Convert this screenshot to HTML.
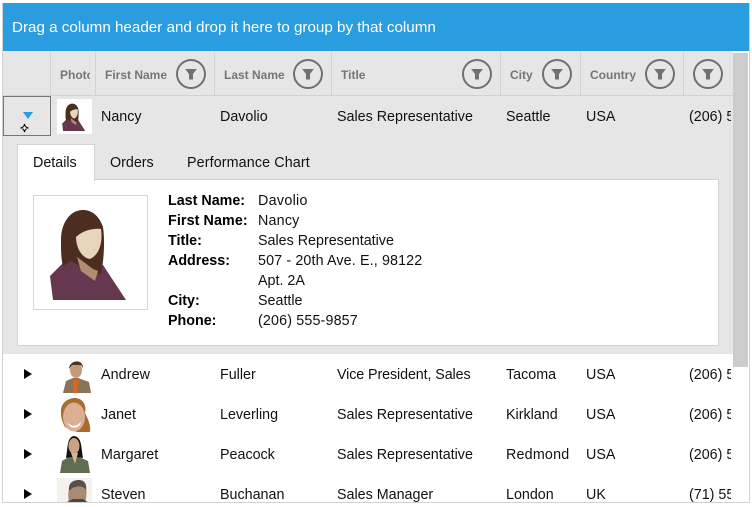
<!DOCTYPE html>
<html><head><meta charset="utf-8">
<style>
html,body{margin:0;padding:0;background:#fff}
#r{position:relative;width:752px;height:507px;overflow:hidden;background:#fff;font-family:"Liberation Sans",sans-serif;font-size:14.3px;color:#111}
#r div{position:absolute}
.t{white-space:nowrap;line-height:20px}
.h{white-space:nowrap;font-weight:bold;font-size:12px;color:#767676;line-height:16px;top:67px}
.b{font-weight:bold;color:#000;white-space:nowrap;line-height:20px;left:168px}
.v{white-space:nowrap;line-height:20px;left:258px}
.s{background:#d2d2d2;width:1px;top:52px;height:44px}
svg{position:absolute;display:block}
.p{left:689px;width:42px;overflow:hidden}
</style></head><body>
<div id="r">
<svg width="0" height="0" style="position:absolute"><defs>
<symbol id="f" viewBox="0 0 30 30"><circle cx="15" cy="15" r="14" fill="none" stroke="#707070" stroke-width="2"/><path d="M9.200 10H20.800L17 15V20.500H13V15Z" fill="#707070"/></symbol>
<symbol id="nancy" viewBox="0 0 115 115"><rect width="115" height="115" fill="#fff"/>
<path d="M17 81L33 65L70 70L93 105H20Z" fill="#65384f"/>
<path d="M50 15C37 15 28 28 28 45C28 56 28 64 30 71L38 66L60 78L68 79C71 65 72 45 70 32C66 20 58 15 50 15Z" fill="#4c2d1f"/>
<path d="M43 42C50 35 62 33 68 34C70 48 66 60 57 64C49 63 43 53 43 42Z" fill="#e6d6bc"/>
<path d="M44 62L60 74L65 76L62 86L48 76Z" fill="#b08d72"/>
</symbol>
</defs></svg>

<div style="left:2px;top:3px;width:748px;height:48px;background:#2a9ce0"></div>
<div class="t" style="left:12px;top:18px;color:#fff;font-size:15.2px">Drag a column header and drop it here to group by that column</div>

<div style="left:2px;top:51px;width:731px;height:45px;background:#e6e6e6;border-bottom:1px solid #d2d2d2;box-sizing:border-box"></div>
<div class="s" style="left:50px"></div><div class="s" style="left:95px"></div><div class="s" style="left:214px"></div><div class="s" style="left:331px"></div><div class="s" style="left:500px"></div><div class="s" style="left:580px"></div><div class="s" style="left:683px"></div>
<div class="h" style="left:60px;width:30px;overflow:hidden">Photo</div>
<div class="h" style="left:105px">First Name</div>
<div class="h" style="left:224px">Last Name</div>
<div class="h" style="left:341px">Title</div>
<div class="h" style="left:510px">City</div>
<div class="h" style="left:590px">Country</div>
<svg style="left:176px;top:59px" width="30" height="30"><use href="#f"/></svg>
<svg style="left:293px;top:59px" width="30" height="30"><use href="#f"/></svg>
<svg style="left:462px;top:59px" width="30" height="30"><use href="#f"/></svg>
<svg style="left:542px;top:59px" width="30" height="30"><use href="#f"/></svg>
<svg style="left:645px;top:59px" width="30" height="30"><use href="#f"/></svg>
<svg style="left:693px;top:59px" width="30" height="30"><use href="#f"/></svg>

<div style="left:2px;top:96px;width:731px;height:258px;background:#e6e6e6"></div>
<div style="left:3px;top:96px;width:48px;height:40px;box-sizing:border-box;border:1px solid #767676"></div>
<svg style="left:20px;top:108px" width="16" height="26"><path d="M3 4H13L8 11Z" fill="#2a9ce0"/><path d="M4.500 16Q5 19.500 8.500 20Q5 20.500 4.500 24Q4 20.500 .5 20Q4 19.500 4.500 16Z" fill="#fff" stroke="#000" stroke-width="1"/></svg>
<svg style="left:57px;top:99px" width="35" height="35"><use href="#nancy"/></svg>
<div class="t" style="left:101px;top:107px">Nancy</div>
<div class="t" style="left:220px;top:107px">Davolio</div>
<div class="t" style="left:337px;top:107px">Sales Representative</div>
<div class="t" style="left:506px;top:107px">Seattle</div>
<div class="t" style="left:586px;top:107px">USA</div>
<div class="t p" style="top:107px">(206) 555</div>

<div style="left:17px;top:179px;width:702px;height:167px;box-sizing:border-box;background:#fff;border:1px solid #d2d2d2"></div>
<div style="left:17px;top:144px;width:78px;height:37px;box-sizing:border-box;background:#fff;border:1px solid #d2d2d2;border-bottom:0"></div>
<div class="t" style="left:33px;top:153px">Details</div>
<div class="t" style="left:110px;top:153px">Orders</div>
<div class="t" style="left:187px;top:153px;letter-spacing:.12px">Performance Chart</div>

<svg style="left:33px;top:195px" width="115" height="115"><use href="#nancy"/><rect x=".5" y=".5" width="114" height="114" fill="none" stroke="#d6d6d6"/></svg>

<div class="b" style="top:191px">Last Name:</div><div class="v" style="top:191px;letter-spacing:.3px">Davolio</div>
<div class="b" style="top:211px;letter-spacing:.1px">First Name:</div><div class="v" style="top:211px;letter-spacing:.2px">Nancy</div>
<div class="b" style="top:231px">Title:</div><div class="v" style="top:231px">Sales Representative</div>
<div class="b" style="top:251px">Address:</div><div class="v" style="top:251px;letter-spacing:.13px">507 - 20th Ave. E., 98122</div>
<div class="v" style="top:271px">Apt. 2A</div>
<div class="b" style="top:291px">City:</div><div class="v" style="top:291px">Seattle</div>
<div class="b" style="top:311px">Phone:</div><div class="v" style="top:311px;letter-spacing:.15px">(206) 555-9857</div>

<!-- rows -->
<svg style="left:23px;top:368px" width="10" height="135"><path d="M1 1L9 6L1 11ZM1 41L9 46L1 51ZM1 81L9 86L1 91ZM1 121L9 126L1 131Z" fill="#000"/></svg>

<svg style="left:57px;top:357px" width="35" height="146" viewBox="0 0 35 146">
<path d="M6 36L9 24L16 21H21L32 25L34 36Z" fill="#8a7359"/><path d="M16 23H22L20 36H16Z" fill="#d8661c"/><ellipse cx="19" cy="13" rx="6" ry="8" fill="#c59a78"/><path d="M12 12C12 3 26 1 26 11L24 8H15Z" fill="#4a3322"/>
<path d="M4 56C3 46 11 41 18 41C26 41 30 49 28 56C31 62 34 68 33 75H20L8 70C6 66 4 62 4 56Z" fill="#a96b30"/><ellipse cx="17" cy="60" rx="11" ry="14.500" fill="#dcae92"/><path d="M10 65C14 70 21 70 24 64L23 68C19 72 13 72 10 65Z" fill="#fff"/>
<path d="M3 116L5 104L12 100H22L31 104L33 116Z" fill="#5f6d50"/><path d="M9 101C11 90 10 80 17 79C25 80 24 90 26 101L20 100H14Z" fill="#111"/><ellipse cx="17" cy="89" rx="5.500" ry="8" fill="#cda184"/><path d="M14 96H21L18 107Z" fill="#d4b49a"/>
<rect x="0" y="121" width="35" height="25" fill="#f4f2ef"/><path d="M12 146C10 134 12 125 21 125C30 125 31 134 28 146Z" fill="#a88a72"/><path d="M12 134C11 125 17 123 22 123C28 123 30 128 29 133C26 128 17 128 12 134Z" fill="#55504c"/><path d="M8 146L16 142H26L32 146Z" fill="#4a4642"/>
</svg>

<div class="t" style="left:101px;top:365px;letter-spacing:.1px">Andrew</div><div class="t" style="left:220px;top:365px">Fuller</div><div class="t" style="left:337px;top:365px;letter-spacing:-.1px">Vice President, Sales</div><div class="t" style="left:506px;top:365px">Tacoma</div><div class="t" style="left:586px;top:365px">USA</div><div class="t p" style="top:365px">(206) 555</div>
<div class="t" style="left:101px;top:405px">Janet</div><div class="t" style="left:220px;top:405px">Leverling</div><div class="t" style="left:337px;top:405px">Sales Representative</div><div class="t" style="left:506px;top:405px">Kirkland</div><div class="t" style="left:586px;top:405px">USA</div><div class="t p" style="top:405px">(206) 555</div>
<div class="t" style="left:101px;top:445px">Margaret</div><div class="t" style="left:220px;top:445px">Peacock</div><div class="t" style="left:337px;top:445px">Sales Representative</div><div class="t" style="left:506px;top:445px;letter-spacing:.2px">Redmond</div><div class="t" style="left:586px;top:445px">USA</div><div class="t p" style="top:445px">(206) 555</div>
<div class="t" style="left:101px;top:485px">Steven</div><div class="t" style="left:220px;top:485px">Buchanan</div><div class="t" style="left:337px;top:485px">Sales Manager</div><div class="t" style="left:506px;top:485px">London</div><div class="t" style="left:586px;top:485px">UK</div><div class="t p" style="top:485px">(71) 555</div>

<div style="left:733px;top:53px;width:15px;height:314px;background:#cccccc"></div>
<div style="left:0;top:503px;width:752px;height:4px;background:#fff"></div>
<div style="left:2px;top:3px;width:748px;height:500px;box-sizing:border-box;border:1px solid #d2d2d2;border-top:0"></div>
</div>
</body></html>
